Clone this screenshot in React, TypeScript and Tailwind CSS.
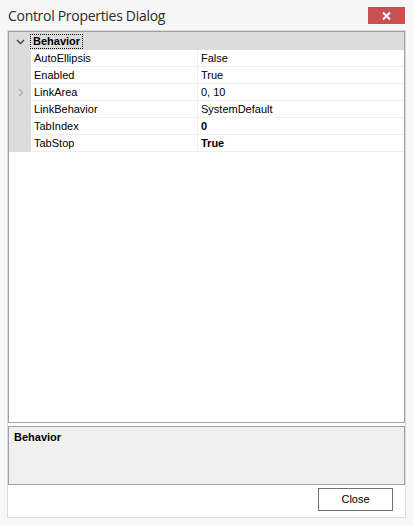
import React from "react";

type Prop = { name: string; value: string; bold?: boolean; expandable?: boolean };

const props: Prop[] = [
  { name: "AutoEllipsis", value: "False" },
  { name: "Enabled", value: "True" },
  { name: "LinkArea", value: "0, 10", expandable: true },
  { name: "LinkBehavior", value: "SystemDefault" },
  { name: "TabIndex", value: "0", bold: true },
  { name: "TabStop", value: "True", bold: true },
];

const Chevron = ({ dir }: { dir: "down" | "right" }) => (
  <svg width="9" height="9" viewBox="0 0 9 9" className="block">
    {dir === "down" ? (
      <path d="M1 3 L4.5 6.5 L8 3" fill="none" stroke="#404040" strokeWidth="1.4" />
    ) : (
      <path d="M3 1 L6.5 4.5 L3 8" fill="none" stroke="#b0b0b0" strokeWidth="1.4" />
    )}
  </svg>
);

const App = () => {
  return (
    <div
      className="w-[413px] h-[525px] bg-[#f7f7f7] flex flex-col text-[11px] text-black"
      style={{ fontFamily: "Tahoma, 'Liberation Sans', sans-serif" }}
    >
      {/* title bar */}
      <div className="h-[30px] flex items-start justify-between pl-[8px] pr-[8px]">
        <span
          className="mt-[5px] text-[14px] text-[#2b2b2b] tracking-[-0.3px]"
          style={{ fontFamily: "'Open Sans', 'Noto Sans', sans-serif" }}
        >
          Control Properties Dialog
        </span>
        <button className="mt-[7px] w-[37px] h-[17px] bg-[#c75050] flex items-center justify-center">
          <svg width="9" height="8" viewBox="0 0 9 8">
            <path d="M1 0.5 L8 7.5 M8 0.5 L1 7.5" stroke="white" strokeWidth="2" />
          </svg>
        </button>
      </div>

      {/* client area */}
      <div className="mx-[7px] h-[488px] bg-white border border-[#dcdcdc] flex flex-col">
        {/* property grid */}
        <div className="h-[392px] border border-[#a0a0a0] flex flex-col">
          <div className="h-[18px] bg-[#dcdcdc] flex items-center">
            <div className="w-[22px] flex justify-center pl-[1px]">
              <Chevron dir="down" />
            </div>
            <span className="font-bold border border-dotted border-black px-[2px] h-[15px] leading-[13px] ml-[-1px]">
              Behavior
            </span>
          </div>
          <div className="flex flex-col">
            {props.map((p) => (
              <div key={p.name} className="h-[17px] flex">
                <div className="w-[22px] bg-[#dcdcdc] flex items-center justify-center">
                  {p.expandable && <Chevron dir="right" />}
                </div>
                <div className="w-[167px] border-b border-r border-[#f0f0f0] pl-[3px] leading-[16px]">
                  {p.name}
                </div>
                <div
                  className={`flex-1 border-b border-[#f0f0f0] pl-[3px] leading-[16px] ${
                    p.bold ? "font-bold" : ""
                  }`}
                >
                  {p.value}
                </div>
              </div>
            ))}
          </div>
        </div>

        {/* description pane */}
        <div className="mt-[3px] h-[59px] bg-[#f0f0f0] border border-[#a0a0a0] px-[5px] pt-[2px]">
          <span className="font-bold">Behavior</span>
        </div>

        <div className="flex justify-end pr-[12px] mt-[3px]">
          <button className="w-[75px] h-[23px] border border-[#707070] bg-white text-[11px]">Close</button>
        </div>
      </div>
    </div>
  );
};

export default App;
